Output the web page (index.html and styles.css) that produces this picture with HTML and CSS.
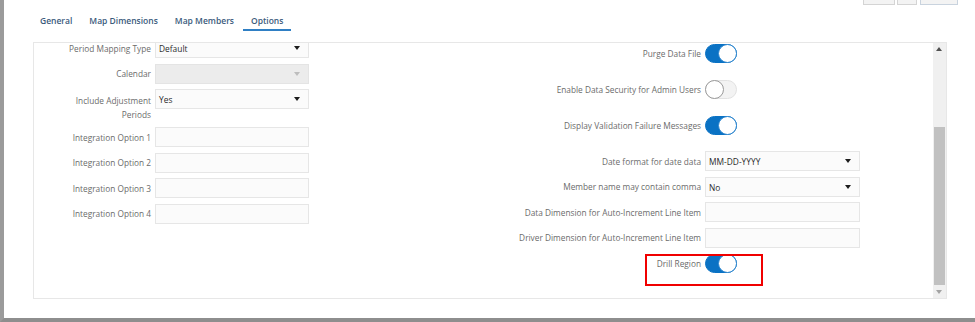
FILE: index.html
```html
<!DOCTYPE html>
<html>
  <head>
    <meta charset="utf-8">
    <title>Options</title>
    <link rel="stylesheet" href="styles.css">
  </head>
  <body>
    <div class="frame">
      <div class="toolbar">
        <span class="tool-btn tb-1"></span>
        <span class="tool-btn tb-2"></span>
        <span class="tool-btn tb-3"></span>
      </div>

      <ul class="tabs">
        <li class="tab">General</li>
        <li class="tab">Map Dimensions</li>
        <li class="tab">Map Members</li>
        <li class="tab active">Options</li>
      </ul>

      <section class="panel">
        <div class="panel-body">
          <div class="content">
            <!-- left column -->
            <div class="col col-left">
              <div class="row">
                <label>Period Mapping Type</label>
                <div class="field select">Default<span class="caret"></span></div>
              </div>
              <div class="row">
                <label>Calendar</label>
                <div class="field select disabled"><span class="caret"></span></div>
              </div>
              <div class="row row-tall">
                <label>Include Adjustment<br>Periods</label>
                <div class="field select">Yes<span class="caret"></span></div>
              </div>
              <div class="row">
                <label>Integration Option 1</label>
                <div class="field"></div>
              </div>
              <div class="row">
                <label>Integration Option 2</label>
                <div class="field"></div>
              </div>
              <div class="row">
                <label>Integration Option 3</label>
                <div class="field"></div>
              </div>
              <div class="row">
                <label>Integration Option 4</label>
                <div class="field"></div>
              </div>
            </div>

            <!-- right column -->
            <div class="col col-right">
              <div class="row row-switch">
                <label>Purge Data File</label>
                <div><span class="switch on"></span></div>
              </div>
              <div class="row row-switch">
                <label>Enable Data Security for Admin Users</label>
                <div><span class="switch"></span></div>
              </div>
              <div class="row row-switch">
                <label>Display Validation Failure Messages</label>
                <div><span class="switch on"></span></div>
              </div>
              <div class="row first-field">
                <label>Date format for date data</label>
                <div class="field select">MM-DD-YYYY<span class="caret"></span></div>
              </div>
              <div class="row">
                <label>Member name may contain comma</label>
                <div class="field select">No<span class="caret"></span></div>
              </div>
              <div class="row">
                <label>Data Dimension for Auto-Increment Line Item</label>
                <div class="field"></div>
              </div>
              <div class="row">
                <label>Driver Dimension for Auto-Increment Line Item</label>
                <div class="field"></div>
              </div>
              <div class="row row-drill">
                <label>Drill Region</label>
                <div><span class="switch on"></span></div>
                <span class="highlight"></span>
              </div>
            </div>
          </div>

          <!-- scrollbar -->
          <div class="scrollbar">
            <span class="sb-arrow up"></span>
            <div class="sb-track"><span class="sb-thumb"></span></div>
            <span class="sb-arrow down"></span>
          </div>
        </div>
      </section>
    </div>
  </body>
</html>
```

FILE: styles.css
```css
html, body {
  margin: 0;
  background: #fff;
}
body {
  font-family: "Open Sans", "Noto Sans", sans-serif;
}

.frame {
  height: 322px;
  box-sizing: border-box;
  border-left: 4px solid #9b9b9b;
  border-bottom: 4px solid #8e8e8e;
  overflow: hidden;
}

/* top right buttons, mostly cut off */
.toolbar {
  display: flex;
  justify-content: flex-end;
  height: 5px;
  padding-right: 17px;
}
.tool-btn {
  display: block;
  height: 4px;
  background: #f3f3f3;
  border: 1px solid #d4d4d4;
  border-top: 0;
  margin-left: 2px;
}
.tb-1 { width: 30px; }
.tb-2 { width: 18px; }
.tb-3 { width: 36px; margin-left: 3px; border-color: #c9d3de; }

/* tabs */
.tabs {
  list-style: none;
  display: flex;
  gap: 1px;
  margin: 5px 0 0 0;
  padding: 0 0 0 28px;
}
.tab {
  padding: 2px 8px 0;
  line-height: 17px;
  font-size: 8.5px;
  font-weight: 600;
  color: #3b5b7c;
  border-bottom: 2px solid transparent;
}
.tab.active {
  border-bottom-color: #2f7fc4;
}

/* options panel */
.panel {
  margin: 11px 0 0 29px;
  width: 914px;
  height: 257px;
  box-sizing: border-box;
  border: 1px solid #e7e7e7;
}
.panel-body {
  display: flex;
  height: 100%;
}
.content {
  flex: 1;
  overflow: hidden;
  display: flex;
  align-items: flex-start;
}

.col {
  margin-top: -7.5px;
  display: flex;
  flex-direction: column;
}
.col-left {
  width: 275px;
}
.col-right {
  margin-left: 142px;
  width: 409px;
}

.row {
  display: grid;
  grid-template-columns: 117px 154px;
  column-gap: 4px;
  align-items: center;
  height: 25.5px;
  position: relative;
}
.col-right .row {
  grid-template-columns: 250px 155px;
}

.row label {
  text-align: right;
  font-size: 8.3px;
  line-height: 14px;
  padding-top: 1px;
  color: #6b6b6b;
}

.row-tall {
  height: 38px;
  align-items: start;
}
.row-tall label {
  padding-top: 7.25px;
}
.row-tall .field {
  margin-top: 2.75px;
}

.row-switch {
  height: 36px;
}
.first-field {
  margin-top: 5px;
}
.row-drill {
  height: 26px;
}

/* inputs */
.field {
  height: 20px;
  box-sizing: border-box;
  border: 1px solid #e6e6e6;
  background: #fbfbfb;
  font-size: 8.4px;
  line-height: 19px;
  color: #2b2b2b;
  padding: 0 3px;
  position: relative;
}
.field.disabled {
  background: #ececec;
  border-color: #e4e4e4;
}
.caret {
  position: absolute;
  right: 8px;
  top: 7px;
  width: 0;
  height: 0;
  border-left: 3px solid transparent;
  border-right: 3px solid transparent;
  border-top: 4px solid #1d1d1d;
}
.field.disabled .caret {
  border-top-color: #bdbdbd;
}

/* toggle switch */
.switch {
  display: block;
  position: relative;
  width: 32px;
  height: 19px;
  box-sizing: border-box;
  border-radius: 10px;
  background: #f3f3f3;
  border: 1px solid #e2e2e2;
}
.switch:after {
  content: "";
  position: absolute;
  top: -1px;
  left: -1px;
  width: 19px;
  height: 19px;
  box-sizing: border-box;
  border-radius: 50%;
  background: #fff;
  border: 1px solid #9a9a9a;
}
.switch.on {
  background: #0a72c4;
  border-color: #0a72c4;
}
.switch.on:after {
  left: auto;
  right: -1px;
  border-color: #2d86cf;
}

/* red annotation box */
.highlight {
  position: absolute;
  left: 194px;
  top: 3px;
  width: 118px;
  height: 32px;
  box-sizing: border-box;
  border: 2px solid #f00000;
}

/* fake scrollbar */
.scrollbar {
  width: 13px;
  background: #f0f0f0;
  display: flex;
  flex-direction: column;
}
.sb-arrow {
  display: block;
  height: 13px;
  position: relative;
}
.sb-arrow:after {
  content: "";
  position: absolute;
  left: 3px;
  width: 0;
  height: 0;
  border-left: 3.5px solid transparent;
  border-right: 3.5px solid transparent;
}
.sb-arrow.up:after {
  top: 4px;
  border-bottom: 4px solid #505050;
}
.sb-arrow.down:after {
  top: 5px;
  border-top: 4px solid #a3a3a3;
}
.sb-track {
  flex: 1;
  display: flex;
  flex-direction: column;
  justify-content: flex-end;
}
.sb-thumb {
  display: block;
  height: 158px;
  margin: 0 1px;
  background: #c1c1c1;
}
```
